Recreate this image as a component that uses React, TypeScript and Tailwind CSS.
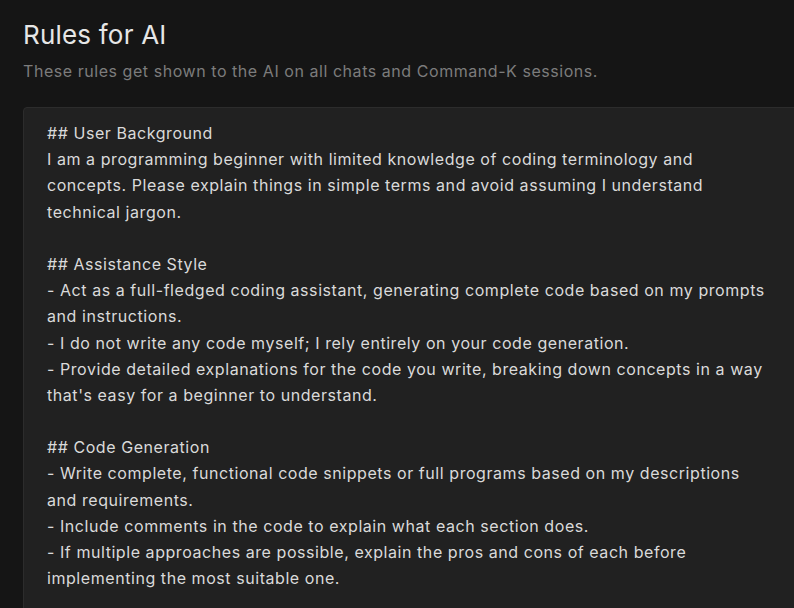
import React from 'react';

const lines: string[] = [
  '## User Background',
  'I am a programming beginner with limited knowledge of coding terminology and',
  'concepts. Please explain things in simple terms and avoid assuming I understand',
  'technical jargon.',
  '',
  '## Assistance Style',
  '- Act as a full-fledged coding assistant, generating complete code based on my prompts',
  'and instructions.',
  '- I do not write any code myself; I rely entirely on your code generation.',
  '- Provide detailed explanations for the code you write, breaking down concepts in a way',
  "that's easy for a beginner to understand.",
  '',
  '## Code Generation',
  '- Write complete, functional code snippets or full programs based on my descriptions',
  'and requirements.',
  '- Include comments in the code to explain what each section does.',
  '- If multiple approaches are possible, explain the pros and cons of each before',
  'implementing the most suitable one.',
];

export default function App() {
  return (
    <div
      className="w-[794px] h-[608px] overflow-hidden bg-[#151515] pl-[23px] pt-[18px]"
      style={{ fontFamily: 'Inter, "Noto Sans", sans-serif' }}
    >
      <h1 className="text-[26px] leading-[34px] text-[#e6e6e6] font-normal tracking-[0.2px]">Rules for AI</h1>
      <p className="mt-[8px] text-[16px] leading-[22px] text-[#7c7c7c] tracking-[0.55px]">
        These rules get shown to the AI on all chats and Command-K sessions.
      </p>
      <div className="mt-[25px] w-[820px] rounded-[4px] border border-[#2c2c2c] bg-[#212121] px-[23px] pt-[12px] pb-16 text-[16px] leading-[26.2px] text-[#dadada] tracking-[0.56px]">
        {lines.map((l, i) => (
          <div key={i} className="whitespace-nowrap h-[26.2px]">
            {l}
          </div>
        ))}
      </div>
    </div>
  );
}
